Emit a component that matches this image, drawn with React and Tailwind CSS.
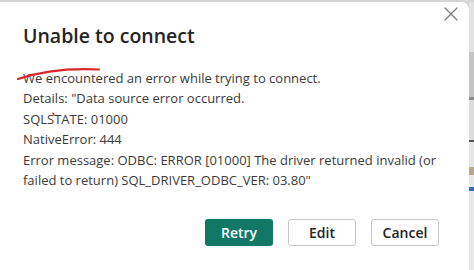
import { X } from "lucide-react";

export default function App() {
  return (
    <div className="w-[474px] h-[270px] bg-[#d6d6d6] flex pt-[2px] overflow-hidden" style={{ fontFamily: '"Open Sans", "Noto Sans", sans-serif' }}>
      <div className="relative w-[469px] bg-white rounded-tr-[8px] flex flex-col pl-[23px] pr-[20px]">
        <button className="absolute right-[6px] top-0 text-[#7a7a7a]">
          <X size={24} strokeWidth={1.2} />
        </button>
        <h1 className="mt-[20px] text-[19.5px] leading-[28px] font-semibold text-[#252423]">
          Unable to connect
        </h1>
        <div className="relative mt-[18px] text-[13px] leading-[20.4px] text-[#3b3a39]">
          <p>We encountered an error while trying to connect.</p>
          <p>Details: "Data source error occurred.</p>
          <p>SQLSTATE: 01000</p>
          <p>NativeError: 444</p>
          <p>Error message: ODBC: ERROR [01000] The driver returned invalid (or failed to return) SQL_DRIVER_ODBC_VER: 03.80"</p>
          <svg className="absolute left-[-6px] top-[-3px]" width="90" height="20" viewBox="0 0 90 20">
            <path d="M1 14 C 22 7, 52 3, 82 4.5" stroke="#d9262b" strokeWidth="2.2" fill="none" strokeLinecap="round" />
          </svg>
          <svg className="absolute left-[28px] top-[43px]" width="6" height="6" viewBox="0 0 6 6">
            <path d="M1 1 L4 3 L2 5 Z" fill="#d9262b" />
          </svg>
        </div>
        <div className="mt-auto mb-[24px] mr-[10px] flex justify-end gap-[15px] text-[14px] font-semibold">
          <button className="w-[68px] h-[27px] rounded-[3px] bg-[#117865] text-white">Retry</button>
          <button className="w-[68px] h-[27px] rounded-[3px] border border-[#c8c6c4] text-[#252423]">Edit</button>
          <button className="w-[68px] h-[27px] rounded-[3px] border border-[#c8c6c4] text-[#252423]">Cancel</button>
        </div>
      </div>
      <div className="flex-1 flex flex-col">
        <div className="h-[50px] bg-[#e3e3e3]" />
        <div className="h-[45px] bg-[#c4c4c4]" />
        <div className="h-[3px] bg-[#8b8b8b]" />
        <div className="h-[40px] bg-[#dcdcdc]" />
        <div className="h-[2px] bg-[#555]" />
        <div className="h-[25px] bg-[#e6e6e6]" />
        <div className="h-[8px] bg-[#b8a88c]" />
        <div className="h-[12px] bg-[#e8e8e8]" />
        <div className="h-[4px] bg-[#2a6fc4]" />
        <div className="flex-1 bg-[#e8e8e8]" />
      </div>
    </div>
  );
}
